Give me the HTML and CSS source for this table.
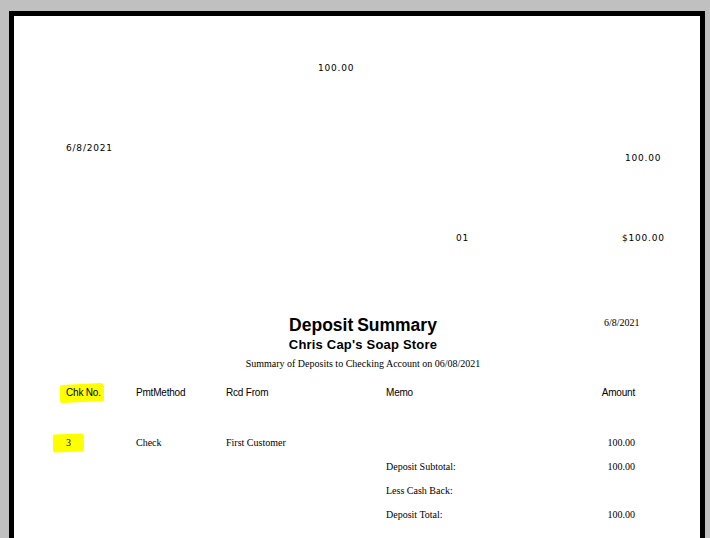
FILE: index.html
```html
<!DOCTYPE html>
<html>
<head>
<meta charset="utf-8">
<link rel="stylesheet" href="styles.css">
</head>
<body>
<div class="sheet">
  <div class="voucher">
    <span class="fld f-amt1">100.00</span>
    <span class="fld f-date">6/8/2021</span>
    <span class="fld f-amt2">100.00</span>
    <span class="fld f-acct">01</span>
    <span class="fld f-amt3">$100.00</span>
  </div>
  <div class="summary">
    <div class="head">
      <div class="titles">
        <div class="title">Deposit Summary</div>
        <div class="store">Chris Cap's Soap Store</div>
        <div class="sub">Summary of Deposits to Checking Account on 06/08/2021</div>
      </div>
      <div class="date">6/8/2021</div>
    </div>
    <div class="table">
      <div class="row hdr">
        <div><span class="hl hl-hdr">Chk No.</span></div>
        <div>PmtMethod</div>
        <div>Rcd From</div>
        <div>Memo</div>
        <div class="num">Amount</div>
      </div>
      <div class="row data">
        <div><span class="hl hl-num">3</span></div>
        <div>Check</div>
        <div>First Customer</div>
        <div></div>
        <div class="num">100.00</div>
      </div>
      <div class="row tot">
        <div></div><div></div><div></div>
        <div>Deposit Subtotal:</div>
        <div class="num">100.00</div>
      </div>
      <div class="row tot">
        <div></div><div></div><div></div>
        <div>Less Cash Back:</div>
        <div class="num"></div>
      </div>
      <div class="row tot">
        <div></div><div></div><div></div>
        <div>Deposit Total:</div>
        <div class="num">100.00</div>
      </div>
    </div>
  </div>
</div>
</body>
</html>
```
FILE: styles.css
```css
html, body {
  margin: 0;
  padding: 0;
  background: #c0c0c0;
  overflow: hidden;
  height: 538px;
}
.sheet {
  margin: 11px 0 0 9px;
  width: 686px;
  height: 522px;
  background: #fff;
  border: 5px solid #000;
  border-bottom: none;
  color: #000;
  overflow: hidden;
}
.voucher {
  position: relative;
  height: 290px;
}
.fld {
  position: absolute;
  font-family: "DejaVu Sans", sans-serif;
  font-size: 9px;
  letter-spacing: 0.8px;
  line-height: 12px;
  white-space: nowrap;
}
.f-amt1 { left: 304px; top: 46px; }
.f-date { left: 52px; top: 126px; }
.f-amt2 { left: 611px; top: 136px; }
.f-acct { left: 442px; top: 216px; }
.f-amt3 { left: 608px; top: 216px; }

.summary {
  padding-top: 9px;
}
.head {
  display: grid;
  grid-template-columns: 219px 260px 111px auto;
}
.titles {
  grid-column: 2;
  text-align: center;
  white-space: nowrap;
}
.title {
  font-family: "Liberation Sans", Arial, sans-serif;
  font-weight: bold;
  font-size: 17.5px;
  line-height: 20px;
  word-spacing: -1px;
}
.store {
  font-family: "Liberation Sans", Arial, sans-serif;
  font-weight: bold;
  font-size: 13px;
  letter-spacing: 0.2px;
  line-height: 20px;
}
.sub {
  font-family: "Liberation Serif", "Times New Roman", serif;
  font-size: 10px;
  line-height: 14px;
  margin-top: 2px;
}
.date {
  grid-column: 4;
  font-family: "Liberation Serif", "Times New Roman", serif;
  font-size: 10px;
  line-height: 12px;
  margin-top: 2px;
}
.table {
  margin-top: 14px;
  padding-left: 52px;
}
.row {
  display: grid;
  grid-template-columns: 70px 90px 160px 180px 69px;
  height: 16px;
  line-height: 16px;
  white-space: nowrap;
}
.row .num { text-align: right; }
.hdr {
  font-family: "Liberation Sans", Arial, sans-serif;
  font-size: 10px;
  letter-spacing: -0.2px;
}
.data, .tot {
  font-family: "Liberation Serif", "Times New Roman", serif;
  font-size: 10px;
}
.data { margin-top: 34px; }
.tot { margin-top: 8px; }
.hl {
  position: relative;
  display: inline-block;
  z-index: 0;
}
.hl::before {
  content: "";
  position: absolute;
  z-index: -1;
  background: #ffff00;
}
.hl-hdr::before {
  left: -6px;
  right: -3px;
  top: -1px;
  bottom: -1px;
  border-radius: 2px 4px 1px 3px;
  transform: skewY(-3deg);
}
.hl-num::before {
  left: -13px;
  right: -13px;
  top: -1px;
  bottom: -1px;
  border-radius: 1px 3px 2px 2px;
  transform: skewY(-2deg);
}
```
